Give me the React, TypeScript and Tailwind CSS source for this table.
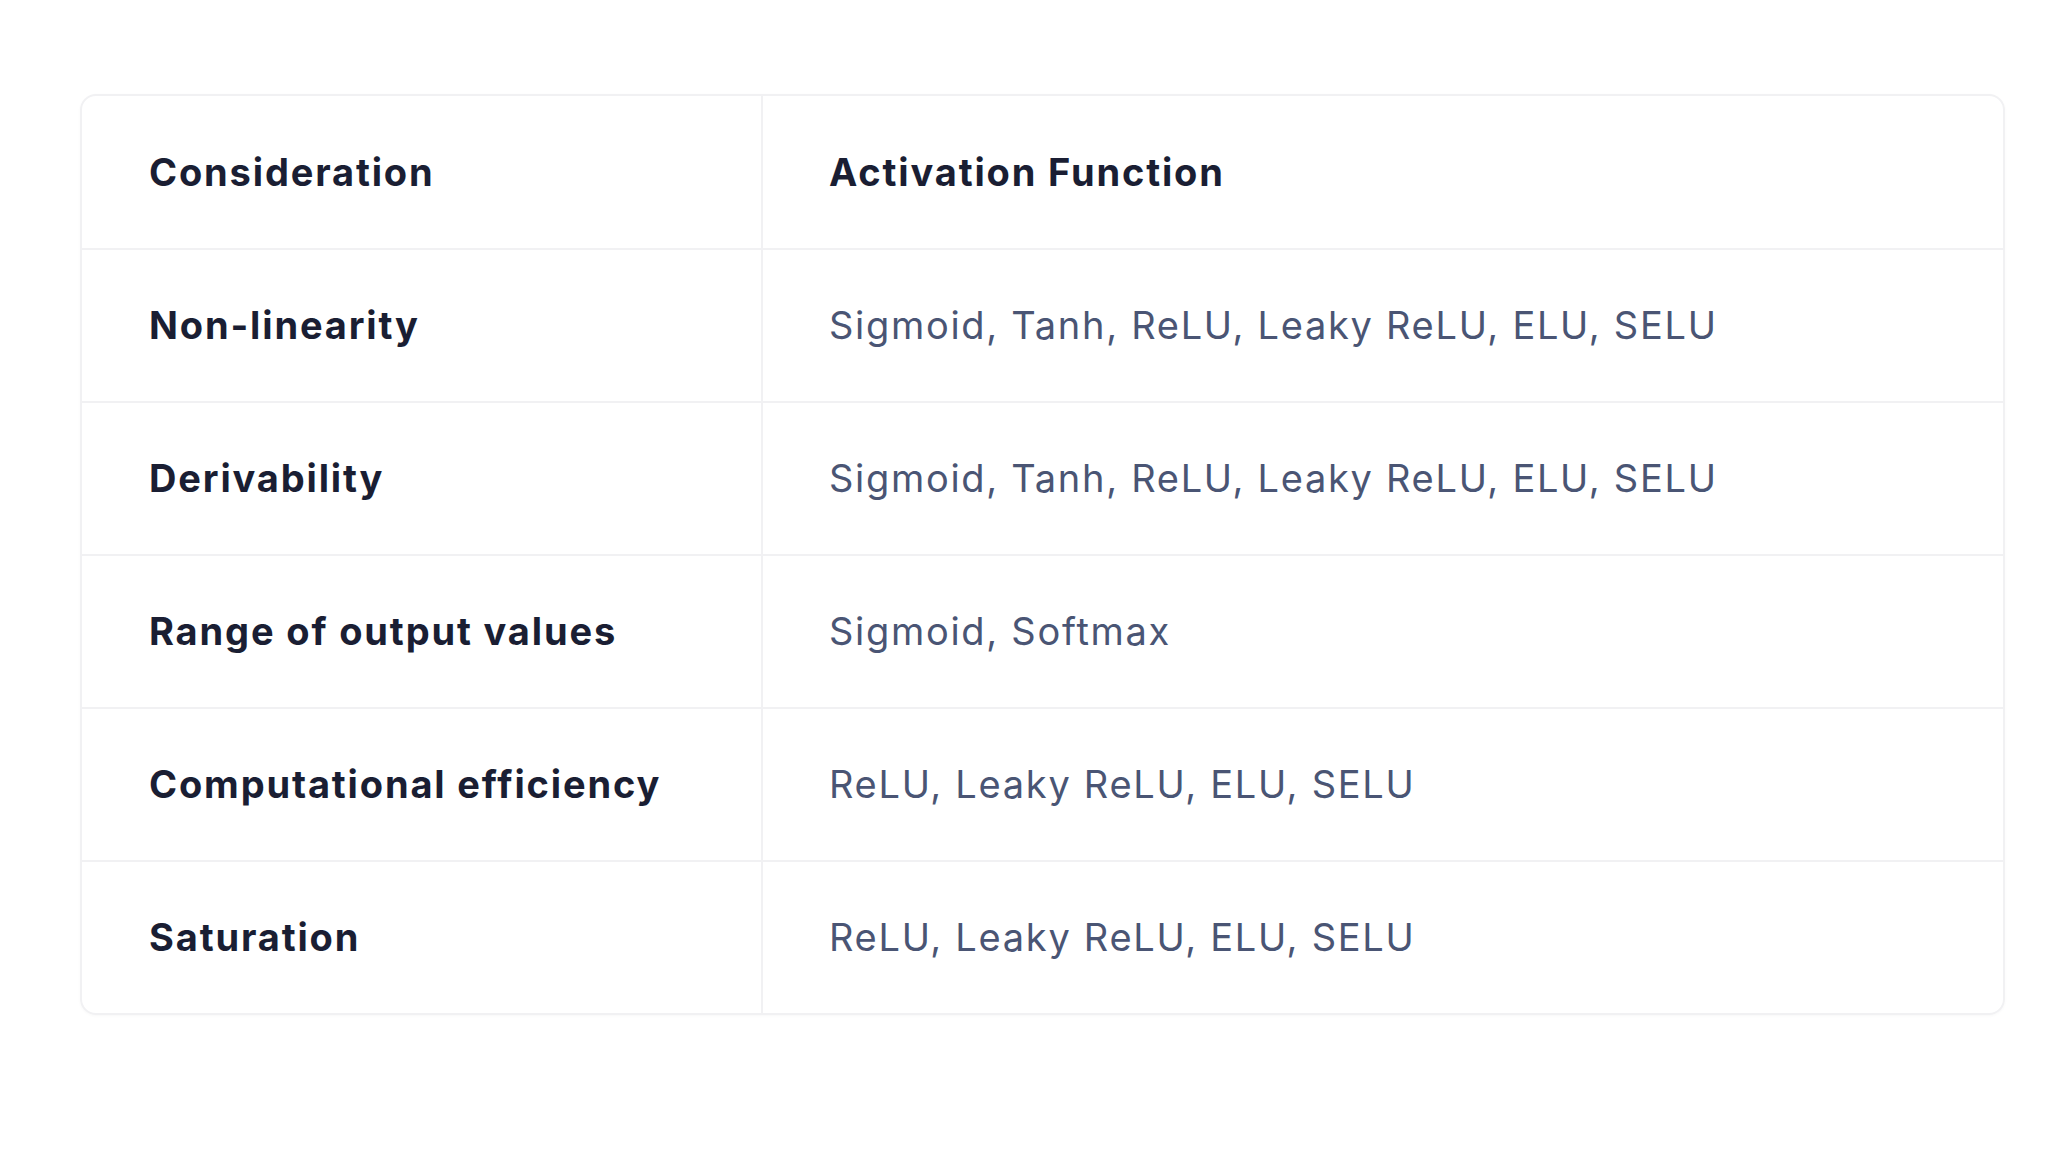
import React from "react";

const rows: [string, string][] = [
  ["Non-linearity", "Sigmoid, Tanh, ReLU, Leaky ReLU, ELU, SELU"],
  ["Derivability", "Sigmoid, Tanh, ReLU, Leaky ReLU, ELU, SELU"],
  ["Range of output values", "Sigmoid, Softmax"],
  ["Computational efficiency", "ReLU, Leaky ReLU, ELU, SELU"],
  ["Saturation", "ReLU, Leaky ReLU, ELU, SELU"],
];

export default function App() {
  return (
    <div
      className="w-[2048px] h-[1152px] bg-white pl-[80px] pt-[94px]"
      style={{ fontFamily: "Inter, 'Noto Sans', sans-serif" }}
    >
      <div className="w-[1925px] rounded-[16px] border-2 border-[#f1f1f3] overflow-hidden shadow-[0_1px_3px_rgba(0,0,0,0.03)]">
        <div className="grid grid-cols-[681px_1fr] h-[152px]">
          <div className="flex items-center pl-[67px] border-r-2 border-[#f1f1f3] text-[38px] font-bold tracking-[1.85px] text-[#1a1e33]">
            Consideration
          </div>
          <div className="flex items-center pl-[66px] text-[38px] font-bold tracking-[1.85px] text-[#1a1e33]">
            Activation Function
          </div>
        </div>
        {rows.map(([a, b]) => (
          <div key={a} className="grid grid-cols-[681px_1fr] h-[153px] border-t-2 border-[#f1f1f3]">
            <div className="flex items-center pl-[67px] border-r-2 border-[#f1f1f3] text-[38px] font-bold tracking-[1.85px] text-[#1a1e33]">
              {a}
            </div>
            <div className="flex items-center pl-[66px] text-[38px] tracking-[1.7px] text-[#4a5574]">
              {b}
            </div>
          </div>
        ))}
      </div>
    </div>
  );
}
